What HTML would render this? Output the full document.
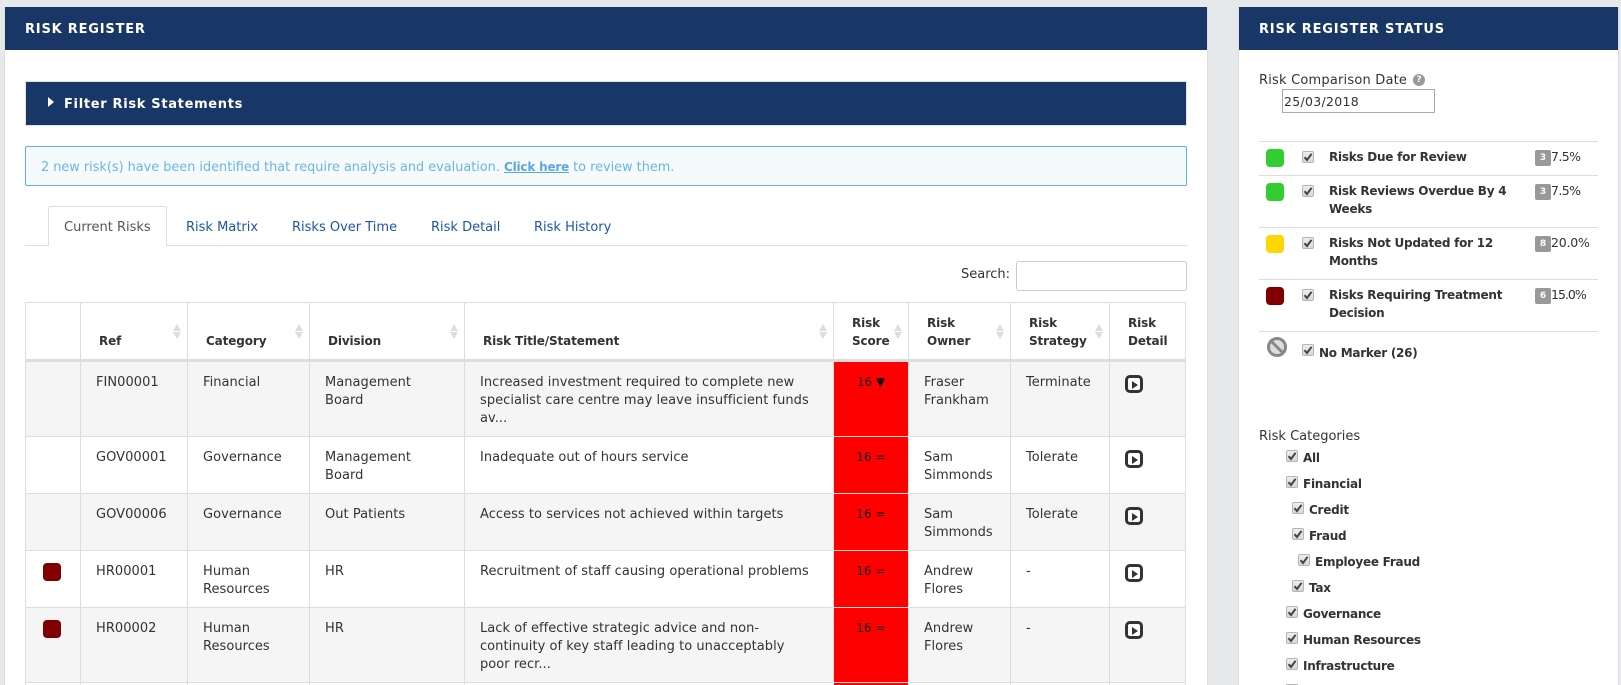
<!DOCTYPE html>
<html lang="en"><head><meta charset="utf-8"><title>Risk Register</title>
<style>
html,body{margin:0;padding:0;width:1621px;height:685px;overflow:hidden;background:#e7e8ea}
body{position:relative;font-family:"DejaVu Sans","Liberation Sans",sans-serif;font-size:13px;color:#333}
*{box-sizing:border-box}
.panel{position:absolute;top:7px;height:678px;background:#fff;border-left:1px solid #ddd;border-right:1px solid #ddd}
.hd{position:absolute;top:7px;height:43px;background:#183666;color:#fff;font-weight:bold;font-size:13px;letter-spacing:.8px;line-height:45px;padding-left:20px}
.t{position:absolute;line-height:18px;white-space:nowrap}
.b{font-weight:bold;font-size:12px;letter-spacing:-.25px}
.filter{position:absolute;left:25px;top:81px;width:1162px;height:45px;background:#183666;border:1px solid #dfe3ea;color:#fff;font-weight:bold;letter-spacing:.68px;line-height:45px;padding-left:38px}
.filter i{position:absolute;left:22px;top:15px;width:0;height:0;border-left:6px solid #fff;border-top:5px solid transparent;border-bottom:5px solid transparent}
.alert{position:absolute;left:25px;top:146px;width:1162px;height:40px;background:#f5fafd;border:1px solid #5ab4e6;border-radius:2px;color:#6cb4e4;line-height:40px;padding-left:15px;font-size:12.85px;white-space:nowrap}
.alert a{font-weight:bold;font-size:12px;letter-spacing:-.2px;color:#5ba8de;text-decoration:underline}
.tabline{position:absolute;left:25px;top:245px;width:1162px;height:1px;background:#ddd}
.tab{position:absolute;top:206px;height:40px;line-height:44px;font-size:13px;color:#1d55ad;white-space:nowrap}
.tab.on{left:48px;width:119px;background:#fff;border:1px solid #ddd;border-bottom:0;border-radius:2px 2px 0 0;color:#555;padding-left:15px;line-height:42px}
.search{position:absolute;left:1016px;top:261px;width:171px;height:30px;border:1px solid #ccc;border-radius:3px;background:#fff}
.wrap{position:absolute;left:25px;top:302px;width:1161px;height:383px;overflow:hidden}
table{width:1161px;border-collapse:separate;border-spacing:0;table-layout:fixed}
th,td{border-left:1px solid #ddd;vertical-align:top;text-align:left}
th:last-child,td:last-child{border-right:1px solid #ddd}
th{position:relative;height:60px;border-top:1px solid #ddd;border-bottom:3px solid #ddd;vertical-align:bottom;padding:0 0 9px 18px;font-size:12px;letter-spacing:-.12px;line-height:18px;font-weight:bold}
td{border-bottom:1px solid #ddd;padding:12px 4px 8px 15px;line-height:18px;white-space:nowrap;letter-spacing:.04px}
tr.o td{background:#f5f5f5}
tr.w td{background:#fff}
tr td.red{background:#f00;color:#111;text-align:center;padding:11px 0 9px;border-bottom-color:#f6dede;font-size:12px;letter-spacing:0}
tr.x td{padding:0;height:2px;border-bottom:0;line-height:0;font-size:0}
th svg{position:absolute;right:6px;top:21px}
.mk{display:block;width:18px;height:18px;border-radius:4px;background:#800000;margin:0 0 0 1px}
td.m{padding-left:16px}
td.p{padding:13px 0 0 15px}
.pl{display:block;width:18px;height:18px;border:3px solid #333;border-radius:5px;position:relative;background:#fff}
.pl:after{content:"";position:absolute;left:4px;top:2.5px;border-left:6px solid #333;border-top:4px solid transparent;border-bottom:4px solid transparent}
.sl{position:absolute;left:1259px;width:339px;height:1px;background:#ddd}
.sw{position:absolute;left:1266px;width:18px;height:18px;border-radius:4px}
.cb{position:absolute;width:12px;height:12px;border:1px solid #b5b5b5;border-radius:2px;background:linear-gradient(#eee,#d8d8d8)}
.cb svg{position:absolute;left:0;top:0}
.bd{position:absolute;left:1535px;width:16px;height:16px;background:#999;border-radius:2px;color:#fff;font-weight:bold;font-size:9px;line-height:16px;text-align:center}
.pc{font-size:12.5px;left:1551px}
.date{position:absolute;left:1282px;top:89px;width:153px;height:24px;border:1px solid #a9a9a9;background:#fff;line-height:24px;padding-left:1px;font-size:12.5px;letter-spacing:.3px}
.help{position:absolute;left:1413px;top:74px;width:12px;height:12px;border-radius:50%;background:#999;color:#fff;font-size:9px;font-weight:bold;line-height:12px;text-align:center}
</style></head><body>

<div class="panel" style="left:4px;width:1204px"></div>
<div class="panel" style="left:1238px;width:381px"></div>
<div class="hd" style="left:5px;width:1202px">RISK REGISTER</div>
<div class="hd" style="left:1239px;width:379px">RISK REGISTER STATUS</div>

<div class="filter"><i></i>Filter Risk Statements</div>
<div class="alert">2 new risk(s) have been identified that require analysis and evaluation. <a>Click here</a> to review them.</div>

<div class="tabline"></div>
<div class="tab on">Current Risks</div>
<div class="tab" style="left:186px">Risk Matrix</div>
<div class="tab" style="left:292px">Risks Over Time</div>
<div class="tab" style="left:431px">Risk Detail</div>
<div class="tab" style="left:534px">Risk History</div>

<div class="t" style="left:961px;top:266px">Search:</div>
<div class="search"></div>

<div class="wrap">
<table>
<colgroup><col style="width:55px"><col style="width:107px"><col style="width:122px"><col style="width:155px"><col style="width:369px"><col style="width:75px"><col style="width:102px"><col style="width:99px"><col style="width:77px"></colgroup>
<thead><tr>
<th></th>
<th>Ref<svg width="8" height="15"><path d="M4 0L8 7H0zM4 15L0 8H8z" fill="#ddd"/></svg></th>
<th>Category<svg width="8" height="15"><path d="M4 0L8 7H0zM4 15L0 8H8z" fill="#ddd"/></svg></th>
<th>Division<svg width="8" height="15"><path d="M4 0L8 7H0zM4 15L0 8H8z" fill="#ddd"/></svg></th>
<th>Risk Title/Statement<svg width="8" height="15"><path d="M4 0L8 7H0zM4 15L0 8H8z" fill="#ddd"/></svg></th>
<th>Risk<br>Score<svg width="8" height="15"><path d="M4 0L8 7H0zM4 15L0 8H8z" fill="#ddd"/></svg></th>
<th>Risk<br>Owner<svg width="8" height="15"><path d="M4 0L8 7H0zM4 15L0 8H8z" fill="#ddd"/></svg></th>
<th>Risk<br>Strategy<svg width="8" height="15"><path d="M4 0L8 7H0zM4 15L0 8H8z" fill="#ddd"/></svg></th>
<th>Risk<br>Detail</th>
</tr></thead>
<tbody>
<tr class="o"><td class="m"></td><td>FIN00001</td><td>Financial</td><td>Management<br>Board</td><td>Increased investment required to complete new<br>specialist care centre may leave insufficient funds<br>av...</td><td class="red">16 ▼</td><td>Fraser<br>Frankham</td><td>Terminate</td><td class="p"><span class="pl"></span></td></tr>
<tr class="w"><td class="m"></td><td>GOV00001</td><td>Governance</td><td>Management<br>Board</td><td>Inadequate out of hours service<br>&nbsp;</td><td class="red">16 =</td><td>Sam<br>Simmonds</td><td>Tolerate</td><td class="p"><span class="pl"></span></td></tr>
<tr class="o"><td class="m"></td><td>GOV00006</td><td>Governance</td><td>Out Patients</td><td>Access to services not achieved within targets</td><td class="red">16 =</td><td>Sam<br>Simmonds</td><td>Tolerate</td><td class="p"><span class="pl"></span></td></tr>
<tr class="w"><td class="m"><span class="mk"></span></td><td>HR00001</td><td>Human<br>Resources</td><td>HR</td><td>Recruitment of staff causing operational problems</td><td class="red">16 =</td><td>Andrew<br>Flores</td><td>-</td><td class="p"><span class="pl"></span></td></tr>
<tr class="o"><td class="m"><span class="mk"></span></td><td>HR00002</td><td>Human<br>Resources</td><td>HR</td><td>Lack of effective strategic advice and non-<br>continuity of key staff leading to unacceptably<br>poor recr...</td><td class="red">16 =</td><td>Andrew<br>Flores</td><td>-</td><td class="p"><span class="pl"></span></td></tr>
<tr class="w x"><td></td><td></td><td></td><td></td><td></td><td class="red"></td><td></td><td></td><td></td></tr>
</tbody></table>
</div>

<div class="t" style="left:1259px;top:72px;letter-spacing:.2px">Risk Comparison Date</div>
<div class="help">?</div>
<div class="date">25/03/2018</div>

<div class="sl" style="top:141px"></div>
<div class="sl" style="top:175px"></div>
<div class="sl" style="top:227px"></div>
<div class="sl" style="top:279px"></div>
<div class="sl" style="top:331px"></div>

<div class="sw" style="top:149px;background:#32cd32"></div>
<div class="sw" style="top:183px;background:#32cd32"></div>
<div class="sw" style="top:235px;background:#ffd700"></div>
<div class="sw" style="top:287px;background:#800000"></div>

<span class="cb" style="left:1302px;top:151px"><svg width="10" height="10"><path d="M1.5 5.2L4 8L8.6 1.8" fill="none" stroke="#444" stroke-width="2"/></svg></span>
<span class="cb" style="left:1302px;top:185px"><svg width="10" height="10"><path d="M1.5 5.2L4 8L8.6 1.8" fill="none" stroke="#444" stroke-width="2"/></svg></span>
<span class="cb" style="left:1302px;top:237px"><svg width="10" height="10"><path d="M1.5 5.2L4 8L8.6 1.8" fill="none" stroke="#444" stroke-width="2"/></svg></span>
<span class="cb" style="left:1302px;top:289px"><svg width="10" height="10"><path d="M1.5 5.2L4 8L8.6 1.8" fill="none" stroke="#444" stroke-width="2"/></svg></span>
<span class="cb" style="left:1302px;top:344px"><svg width="10" height="10"><path d="M1.5 5.2L4 8L8.6 1.8" fill="none" stroke="#444" stroke-width="2"/></svg></span>

<div class="t b" style="left:1329px;top:148px">Risks Due for Review</div>
<div class="t b" style="left:1329px;top:182px">Risk Reviews Overdue By 4<br>Weeks</div>
<div class="t b" style="left:1329px;top:234px">Risks Not Updated for 12<br>Months</div>
<div class="t b" style="left:1329px;top:286px">Risks Requiring Treatment<br>Decision</div>

<div class="bd" style="top:150px">3</div><div class="t pc" style="top:148px;letter-spacing:-.6px">7.5%</div>
<div class="bd" style="top:184px">3</div><div class="t pc" style="top:182px;letter-spacing:-.6px">7.5%</div>
<div class="bd" style="top:236px">8</div><div class="t pc" style="top:234px;letter-spacing:-.2px">20.0%</div>
<div class="bd" style="top:288px">6</div><div class="t pc" style="top:286px;letter-spacing:-1px">15.0%</div>

<svg style="position:absolute;left:1267px;top:337px" width="20" height="20"><circle cx="10" cy="10" r="8.5" fill="#ddd" stroke="#888" stroke-width="3"/><path d="M4 4L16 16" stroke="#888" stroke-width="3"/></svg>
<div class="t b" style="left:1319px;top:344px">No Marker (26)</div>

<div class="t" style="left:1259px;top:428px">Risk Categories</div>

<span class="cb" style="left:1286px;top:450px"><svg width="10" height="10"><path d="M1.5 5.2L4 8L8.6 1.8" fill="none" stroke="#444" stroke-width="2"/></svg></span>
<div class="t b" style="left:1303px;top:449px">All</div>
<span class="cb" style="left:1286px;top:476px"><svg width="10" height="10"><path d="M1.5 5.2L4 8L8.6 1.8" fill="none" stroke="#444" stroke-width="2"/></svg></span>
<div class="t b" style="left:1303px;top:475px">Financial</div>
<span class="cb" style="left:1292px;top:502px"><svg width="10" height="10"><path d="M1.5 5.2L4 8L8.6 1.8" fill="none" stroke="#444" stroke-width="2"/></svg></span>
<div class="t b" style="left:1309px;top:501px">Credit</div>
<span class="cb" style="left:1292px;top:528px"><svg width="10" height="10"><path d="M1.5 5.2L4 8L8.6 1.8" fill="none" stroke="#444" stroke-width="2"/></svg></span>
<div class="t b" style="left:1309px;top:527px">Fraud</div>
<span class="cb" style="left:1298px;top:554px"><svg width="10" height="10"><path d="M1.5 5.2L4 8L8.6 1.8" fill="none" stroke="#444" stroke-width="2"/></svg></span>
<div class="t b" style="left:1315px;top:553px">Employee Fraud</div>
<span class="cb" style="left:1292px;top:580px"><svg width="10" height="10"><path d="M1.5 5.2L4 8L8.6 1.8" fill="none" stroke="#444" stroke-width="2"/></svg></span>
<div class="t b" style="left:1309px;top:579px">Tax</div>
<span class="cb" style="left:1286px;top:606px"><svg width="10" height="10"><path d="M1.5 5.2L4 8L8.6 1.8" fill="none" stroke="#444" stroke-width="2"/></svg></span>
<div class="t b" style="left:1303px;top:605px">Governance</div>
<span class="cb" style="left:1286px;top:632px"><svg width="10" height="10"><path d="M1.5 5.2L4 8L8.6 1.8" fill="none" stroke="#444" stroke-width="2"/></svg></span>
<div class="t b" style="left:1303px;top:631px">Human Resources</div>
<span class="cb" style="left:1286px;top:658px"><svg width="10" height="10"><path d="M1.5 5.2L4 8L8.6 1.8" fill="none" stroke="#444" stroke-width="2"/></svg></span>
<div class="t b" style="left:1303px;top:657px">Infrastructure</div>
<span class="cb" style="left:1286px;top:684px;height:1px;border-bottom:0"></span>

</body></html>
